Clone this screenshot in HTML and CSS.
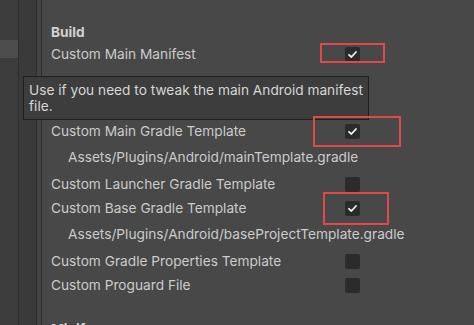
FILE: index.html
```html
<!DOCTYPE html>
<html>
<head>
<meta charset="utf-8">
<link rel="stylesheet" href="styles.css">
</head>
<body>
<div class="app">
  <div class="side1"><div class="sel"></div></div>
  <div class="sep"></div>
  <div class="side2"></div>
  <div class="sep"></div>
  <div class="strip"></div>
  <div class="sep"></div>
  <div class="main">
    <div class="header">Build</div>
    <div class="row"><span class="label">Custom Main Manifest</span><span class="cb on"><svg viewBox="0 0 15 15"><path d="M4 7.8 L6.4 10 L11 5" /></svg></span></div>
    <div class="spacer"></div>
    <div class="row"><span class="label">Custom Main Gradle Template</span><span class="cb on"><svg viewBox="0 0 15 15"><path d="M4 7.8 L6.4 10 L11 5" /></svg></span></div>
    <div class="path">Assets/Plugins/Android/mainTemplate.gradle</div>
    <div class="row"><span class="label">Custom Launcher Gradle Template</span><span class="cb"></span></div>
    <div class="row"><span class="label">Custom Base Gradle Template</span><span class="cb on"><svg viewBox="0 0 15 15"><path d="M4 7.8 L6.4 10 L11 5" /></svg></span></div>
    <div class="path">Assets/Plugins/Android/baseProjectTemplate.gradle</div>
    <div class="row"><span class="label">Custom Gradle Properties Template</span><span class="cb"></span></div>
    <div class="row"><span class="label">Custom Proguard File</span><span class="cb"></span></div>
    <div class="header minify">Minify</div>
  </div>
  <div class="tooltip">Use if you need to tweak the main Android manifest<br>file.</div>
  <div class="mark m1"></div>
  <div class="mark m2"></div>
  <div class="mark m3"></div>
</div>
</body>
</html>
```

FILE: styles.css
```css
html, body {
  margin: 0;
  padding: 0;
  background: #484848;
}
.app {
  position: relative;
  display: flex;
  width: 474px;
  height: 325px;
  overflow: hidden;
  font-family: Inter, "Noto Sans", sans-serif;
  font-size: 13.7px;
  color: #cbcbcb;
}
.side1 {
  width: 18px;
  background: #3c3c3c;
}
.sel {
  margin-top: 40px;
  height: 18px;
  background: #4d4d4d;
}
.sep {
  width: 1px;
  background: #2e2e2e;
}
.side2 {
  width: 17px;
  background: #3a3a3a;
}
.strip {
  width: 4px;
  background: #444444;
}
.main {
  flex: 1;
  background: #484848;
  padding: 23px 0 0 9px;
}
.header {
  height: 19px;
  line-height: 19px;
  font-weight: 700;
  color: #d2d2d2;
}
.minify {
  margin-top: 23px;
}
.spacer {
  height: 53px;
}
.row {
  display: flex;
  align-items: center;
  height: 24px;
}
.label {
  width: 294px;
  white-space: nowrap;
}
.cb {
  width: 15px;
  height: 15px;
  border-radius: 2px;
  background: #2b2b2b;
  display: flex;
}
.cb svg {
  width: 15px;
  height: 15px;
}
.cb path {
  fill: none;
  stroke: #f0f0f0;
  stroke-width: 1.8;
  stroke-linecap: round;
  stroke-linejoin: round;
}
.path {
  height: 29px;
  line-height: 29px;
  padding-left: 17px;
  white-space: nowrap;
}
.tooltip {
  position: absolute;
  left: 23px;
  top: 76px;
  box-sizing: border-box;
  width: 346px;
  height: 44px;
  padding: 5px 4px 4px 5px;
  background: #3d3d3d;
  border: 1px solid #1f1f1f;
  line-height: 16px;
  white-space: nowrap;
  color: #d6d6d6;
}
.mark {
  position: absolute;
  border: 2px solid #e0494a;
}
.m1 { left: 320px; top: 43px; width: 61px; height: 16px; }
.m2 { left: 313px; top: 116px; width: 84px; height: 27px; }
.m3 { left: 323px; top: 192px; width: 62px; height: 29px; }
```
